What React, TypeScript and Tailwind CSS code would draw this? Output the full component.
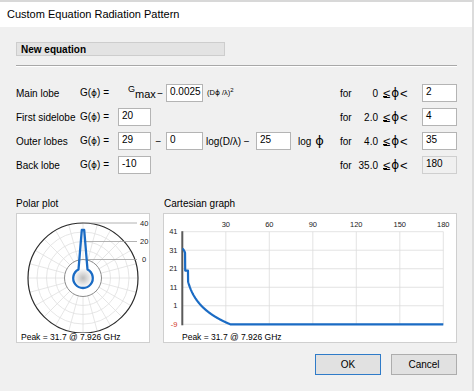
import React from "react";

const F = "font-['Liberation_Sans','Arial',sans-serif]";

function Box({ w, v, disabled }: { w: string; v: string; disabled?: boolean }) {
  return (
    <div
      className={`${w} h-[18px] border ${
        disabled ? "bg-[#f0f0f0] border-[#cfcfcf]" : "bg-white border-[#b4b4b4]"
      } pl-[3px] pt-[1px] text-[10px] leading-[12px] text-black`}
    >
      {v}
    </div>
  );
}

function ForPart({ a, b, disabled }: { a: string; b: string; disabled?: boolean }) {
  return (
    <div className="ml-auto w-[117px] flex items-center">
      <span className="w-[14px] text-[10px]">for</span>
      <span className="w-[24px] text-right text-[10px]">{a}</span>
      <span className="ml-[5px] text-[13px] leading-[13px] flex items-center">
        <span className="underline decoration-[0.5px] underline-offset-[-2px]">≤</span>
        <span className="font-['DejaVu_Sans',sans-serif] text-[12px] mx-[1px]">ϕ</span>
        <span>&lt;</span>
      </span>
      <div className="ml-auto">
        <Box w="w-[35px]" v={b} disabled={disabled} />
      </div>
    </div>
  );
}

function Row({ label, children }: { label: string; children: React.ReactNode }) {
  return (
    <div className="h-[24px] flex items-center text-[10px] text-black">
      <span className="w-[64px] whitespace-nowrap">{label}</span>
      <span className="w-[38px] whitespace-nowrap">
        G(<span className="font-['DejaVu_Sans',sans-serif] text-[9px]">ϕ</span>) =
      </span>
      {children}
    </div>
  );
}

function Polar() {
  const cx = 66;
  const cy = 64;
  const spokes = [];
  for (let a = 0; a < 360; a += 15) {
    const r = (a * Math.PI) / 180;
    spokes.push(
      <line
        key={a}
        x1={cx + 18.5 * Math.cos(r)}
        y1={cy + 18.5 * Math.sin(r)}
        x2={cx + 55 * Math.cos(r)}
        y2={cy + 55 * Math.sin(r)}
        stroke="#e0e0e0"
        strokeWidth={0.8}
      />
    );
  }
  return (
    <svg width={132} height={119} className="block">
      <defs>
        <radialGradient id="cg" cx="50%" cy="50%" r="50%">
          <stop offset="0%" stopColor="#bdbdbd" />
          <stop offset="100%" stopColor="#ffffff" />
        </radialGradient>
      </defs>
      {spokes}
      <circle cx={cx} cy={cy} r={27.5} fill="none" stroke="#e0e0e0" strokeWidth={0.8} />
      <circle cx={cx} cy={cy} r={36.5} fill="none" stroke="#e0e0e0" strokeWidth={0.8} />
      <circle cx={cx} cy={cy} r={46} fill="none" stroke="#e0e0e0" strokeWidth={0.8} />
      <circle cx={cx} cy={cy} r={18.5} fill="none" stroke="#8c8c8c" strokeWidth={1} />
      <circle cx={cx} cy={cy} r={55} fill="none" stroke="#2a2a2a" strokeWidth={1.2} />
      <line x1={cx} y1={9} x2={120} y2={9} stroke="#a0a0a0" strokeWidth={0.8} />
      <line x1={cx + 2} y1={27.5} x2={120} y2={27.5} stroke="#a0a0a0" strokeWidth={0.8} />
      <line x1={cx + 4} y1={45.5} x2={120} y2={45.5} stroke="#a0a0a0" strokeWidth={0.8} />
      <text x={123} y={11.5} fontSize={7.5} fontFamily="Liberation Sans, Arial, sans-serif" fill="#222">40</text>
      <text x={123} y={30} fontSize={7.5} fontFamily="Liberation Sans, Arial, sans-serif" fill="#222">20</text>
      <text x={125} y={48} fontSize={7.5} fontFamily="Liberation Sans, Arial, sans-serif" fill="#222">0</text>
      <circle cx={cx} cy={cy} r={10} fill="url(#cg)" />
      <path
        d={`M${cx - 1.2} 16 L${cx + 1.2} 16 L${cx + 4.5} 55.5 A9.8 9.8 0 1 1 ${cx - 4.5} 55.5 Z`}
        fill="none"
        stroke="#1a6bc4"
        strokeWidth={2.3}
        strokeLinejoin="round"
      />
    </svg>
  );
}

function Cartesian() {
  const x = (p: number) => 18.3 + p * 1.45;
  const y = (v: number) => 17.7 + (41 - v) * 1.852;
  const g = (p: number) => {
    if (p < 2) return 31.7 - 0.6 * p * p;
    if (p < 4) return 20;
    if (p < 35) return 29 - 25 * Math.log10(p);
    return -10;
  };
  const pts: string[] = [];
  for (let p = 0; p <= 40; p += 0.1) {
    const v = Math.max(g(p), -9);
    pts.push(`${x(p).toFixed(2)},${y(v).toFixed(2)}`);
  }
  pts.push(`${x(180)},${y(-9)}`);
  const xs = [30, 60, 90, 120, 150, 180];
  const ys = [41, 31, 21, 11, 1, -9];
  return (
    <svg width={292} height={119} className="block">
      {xs.map((p) => (
        <line key={"v" + p} x1={x(p)} y1={y(41)} x2={x(p)} y2={y(-9)} stroke="#dcdcdc" strokeWidth={0.8} />
      ))}
      {ys.map((v) => (
        <line key={"h" + v} x1={x(0)} y1={y(v)} x2={x(180)} y2={y(v)} stroke="#dcdcdc" strokeWidth={0.8} />
      ))}
      {xs.map((p) => (
        <text key={"t" + p} x={x(p)} y={12.5} fontSize={7.5} textAnchor="middle" fontFamily="Liberation Sans, Arial, sans-serif" fill="#222">
          {p}
        </text>
      ))}
      {ys.map((v) => (
        <text key={"l" + v} x={13.5} y={y(v) + 2.6} fontSize={7.5} textAnchor="end" fontFamily="Liberation Sans, Arial, sans-serif" fill={v === -9 ? "#d23a2a" : "#222"}>
          {v}
        </text>
      ))}
      <line x1={x(0)} y1={y(41) - 0.5} x2={x(0)} y2={y(-9) + 1} stroke="#5a5a5a" strokeWidth={2} />
      <polyline points={pts.join(" ")} fill="none" stroke="#1a6bc4" strokeWidth={2.2} strokeLinejoin="round" />
    </svg>
  );
}

export default function App() {
  return (
    <div className={`w-[474px] h-[391px] flex flex-col bg-[#f0f0f0] text-black ${F} border-t-2 border-[#d8d8d8] border-r-2 border-r-[#dcdcdc] overflow-hidden`}>
      <div className="h-[25px] bg-white flex items-center pl-[7px] text-[11px]">
        Custom Equation Radiation Pattern
      </div>
      <div className="flex flex-col pl-[16px] pr-[15px]">
        <div className="mt-[15px] w-[209px] h-[14px] bg-[#e3e3e3] border border-[#cdcdcd] flex items-center pl-[4px] text-[10px] font-bold">
          New equation
        </div>
        <div className="mt-[9px] h-[2px] border-t border-[#a8a8a8] border-b border-b-white" />
        <div className="mt-[14px] flex flex-col">
          <Row label="Main lobe">
            <div className="w-[48px] flex items-center justify-between pl-[10px] pr-[3px]">
              <span className="text-[11px] leading-[11px] flex items-start">
                <span className="text-[9px] -mt-[3px]">G</span>
                <span className="mt-[2px]">max</span>
              </span>
              <span className="text-[10px]">−</span>
            </div>
            <Box w="w-[37px]" v="0.0025" />
            <span className="ml-[4px] text-[7.5px] whitespace-nowrap">
              (D<span className="font-['DejaVu_Sans',sans-serif]">ϕ</span> /λ)<sup className="text-[6px]">2</sup>
            </span>
            <ForPart a="0" b="2" />
          </Row>
          <Row label="First sidelobe">
            <Box w="w-[33px]" v="20" />
            <ForPart a="2.0" b="4" />
          </Row>
          <Row label="Outer lobes">
            <Box w="w-[33px]" v="29" />
            <span className="w-[15px] text-center">−</span>
            <Box w="w-[37px]" v="0" />
            <span className="ml-[3px] w-[50px] whitespace-nowrap">log(D/λ) −</span>
            <Box w="w-[35px]" v="25" />
            <span className="ml-[7px] whitespace-nowrap flex items-center">
              log<span className="ml-[4px] font-['DejaVu_Sans',sans-serif] text-[13px] leading-[12px]">ϕ</span>
            </span>
            <ForPart a="4.0" b="35" />
          </Row>
          <Row label="Back lobe">
            <Box w="w-[33px]" v="-10" />
            <ForPart a="35.0" b="180" disabled />
          </Row>
        </div>
        <div className="mt-[20px] flex h-[12px] items-center text-[10px]">
          <span className="w-[148px]">Polar plot</span>
          <span>Cartesian graph</span>
        </div>
        <div className="mt-[4px] flex gap-[13px]">
          <div className="w-[134px] h-[130px] bg-white border border-[#cfcfcf] flex flex-col">
            <Polar />
            <div className="pl-[4px] text-[8.5px] leading-[9px]">Peak = 31.7 @ 7.926 GHz</div>
          </div>
          <div className="w-[294px] h-[130px] bg-white border border-[#cfcfcf] flex flex-col">
            <Cartesian />
            <div className="pl-[18px] text-[8.5px] leading-[9px]">Peak = 31.7 @ 7.926 GHz</div>
          </div>
        </div>
        <div className="mt-[11px] flex justify-end gap-[10px]">
          <div className="w-[66px] h-[21px] bg-[#e1e1e1] border border-[#2f7bc8] flex items-center justify-center text-[10px]">
            OK
          </div>
          <div className="w-[66px] h-[21px] bg-[#e1e1e1] border border-[#adadad] flex items-center justify-center text-[10px]">
            Cancel
          </div>
        </div>
      </div>
    </div>
  );
}
